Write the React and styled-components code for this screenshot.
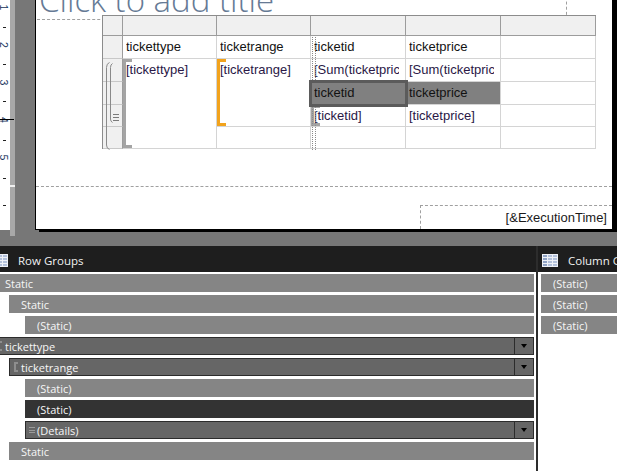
import React from 'react';
import styled, { createGlobalStyle, css } from 'styled-components';

const GlobalStyle = createGlobalStyle`
  html, body { margin: 0; padding: 0; background: #fff; }
  body { width: 617px; height: 471px; overflow: hidden; }
  * { box-sizing: border-box; }
`;

const Screen = styled.div`
  width: 617px;
  height: 471px;
  display: flex;
  flex-direction: column;
  overflow: hidden;
`;

/* ---------- design surface ---------- */

const Designer = styled.div`
  height: 246px;
  flex: none;
  background: #777;
  display: flex;
  align-items: flex-start;
  overflow: hidden;
`;

const Page = styled.div`
  flex: none;
  margin-left: 20px;
  margin-top: -20px;
  width: 578px;
  height: 250px;
  background: #fff;
  border: 1px solid #000;
  box-shadow: 4px 2px 0 #000;
  display: flex;
  flex-direction: column;
`;

const Body = styled.div`
  height: 206px;
  flex: none;
  border-bottom: 1px dashed #a0a0a0;
`;

const TitleBox = styled.div`
  margin-left: 1px;
  width: 530px;
  height: 39px;
  border-right: 1px dashed #a0a0a0;
  border-bottom: 1px dashed #a0a0a0;
  overflow: hidden;
  padding-left: 2px;
  font-family: 'Open Sans', 'Noto Sans', sans-serif;
  font-weight: 300;
  font-size: 33px;
  line-height: 38px;
  color: #667a95;
  white-space: nowrap;
`;

const Tablix = styled.div`
  position: relative;
  z-index: 1;
  margin-left: 66px;
  margin-top: -5px;
  width: 494px;
  display: grid;
  grid-template-columns: 20px 94px 94px 95px 95px 95px;
  grid-template-rows: 20px 23px 23px 23px 22px 22px;
  border-left: 1px solid #8c8c8c;
  border-top: 1px solid #8c8c8c;
  background: #fff;
`;

const Handle = styled.div`
  background: #f0f0f0;
  border-right: 1px solid #9c9c9c;
  border-bottom: 1px solid ${(p) => (p.$top ? '#9c9c9c' : '#c8c8c8')};
`;

const barColors = { grey: '#a4a4a4', orange: '#f2a31c' };
const shades = { grey: '#808080', selected: '#808080' };

const Cell = styled.div`
  position: relative;
  grid-row: span ${(p) => p.$rows || 1};
  background: ${(p) => shades[p.$shade] || '#fff'};
  border-right: 1px solid #d4d4d4;
  border-bottom: 1px solid #d4d4d4;
  padding-left: 3px;
  font-family: 'Liberation Sans', Arial, sans-serif;
  font-size: 13px;
  line-height: 22px;
  color: ${(p) => (p.$field ? '#2a1846' : '#121212')};
  ${(p) =>
    p.$shade === 'selected' &&
    css`
      z-index: 3;
      outline: 3px solid #5b5b5b;
      outline-offset: -1px;
    `}
  ${(p) =>
    p.$bar &&
    css`
      &::before {
        content: '';
        position: absolute;
        left: 0;
        top: 0;
        bottom: 0;
        width: 6px;
        border: solid ${barColors[p.$bar]};
        border-width: 3px 0 3px 3px;
      }
    `}
`;

const CellText = styled.span`
  display: block;
  margin-right: 6px;
  white-space: nowrap;
  overflow: hidden;
`;

const GroupMarker = styled.div`
  position: absolute;
  z-index: 2;
  left: 209px;
  top: 21px;
  width: 4px;
  height: 113px;
  border-left: 1px dotted #8a8a8a;
  border-right: 1px dotted #8a8a8a;
  pointer-events: none;
`;

const RowBracket = styled.svg`
  position: absolute;
  z-index: 2;
  left: 0;
  top: 44px;
`;

const Footer = styled.div`
  flex: 1;
  display: flex;
  justify-content: flex-end;
  align-items: flex-end;
`;

const ExecBox = styled.div`
  width: 192px;
  height: 24px;
  border-top: 1px dashed #a0a0a0;
  border-left: 1px dashed #a0a0a0;
  padding: 1px 5px 0 0;
  text-align: right;
  font-family: 'Liberation Sans', Arial, sans-serif;
  font-size: 13px;
  line-height: 22px;
  color: #1a1a1a;
`;

const Ruler = () => {
  const numbers = [
    [1, 7.5],
    [2, 45],
    [3, 82.5],
    [4, 120],
    [5, 157.5],
  ];
  const ticks = [27, 64, 101, 140, 178, 205];
  return (
    <svg width="15" height="236" style={{ flex: 'none', display: 'block' }}>
      <rect x="0" y="0" width="10" height="230" fill="#fff" />
      <rect x="10" y="0" width="5" height="236" fill="#a8a8a8" />
      <rect x="10" y="185" width="5" height="2" fill="#f0f0f0" />
      {ticks.map((y) => (
        <rect key={y} x="3" y={y} width="3" height="1" fill="#222" />
      ))}
      {numbers.map(([n, y]) => (
        <text
          key={n}
          transform={`translate(0 ${y}) rotate(90)`}
          textAnchor="middle"
          fontSize="10.5"
          fontFamily="'Liberation Sans', sans-serif"
          fill="#14325a"
        >
          {n}
        </text>
      ))}
      <rect x="0" y="119" width="14" height="1" fill="#000" />
    </svg>
  );
};

/* ---------- grouping pane ---------- */

const Panels = styled.div`
  flex: 1;
  display: flex;
  background: #fff;
  min-height: 0;
`;

const Pane = styled.div`
  display: flex;
  flex-direction: column;
  overflow: hidden;
  ${(p) => (p.$width ? css`width: ${p.$width}px; flex: none;` : css`flex: 1; min-width: 0;`)}
`;

const Divider = styled.div`
  width: 2px;
  flex: none;
  background: #2d2d2d;
`;

const PaneHeader = styled.div`
  height: 26px;
  flex: none;
  background: #1e1e1e;
  display: flex;
  align-items: center;
  gap: 10px;
  padding-left: ${(p) => p.$pad}px;
  padding-top: 2px;
  color: #f1f1f1;
  font-family: 'Open Sans', 'Noto Sans', sans-serif;
  font-size: 11.5px;
  white-space: nowrap;
`;

const List = styled.div`
  display: flex;
  flex-direction: column;
  gap: 3px;
  padding-top: 2px;
`;

const itemBg = { static: '#858585', group: '#666666', selected: '#333333' };

const Item = styled.div`
  position: relative;
  flex: none;
  height: 18px;
  margin-left: ${(p) => p.$left}px;
  margin-right: ${(p) => p.$right || 0}px;
  padding-left: 12px;
  display: flex;
  align-items: center;
  background: ${(p) => itemBg[p.$variant]};
  color: #f6f6f6;
  font-family: 'Open Sans', 'Noto Sans', sans-serif;
  font-size: 11px;
  white-space: nowrap;
  ${(p) =>
    p.$variant === 'group' &&
    css`
      border: 1px solid #2c2c2c;
      padding-left: 11px;
    `}
`;

const DropButton = styled.div`
  margin-left: auto;
  width: 19px;
  height: 100%;
  border-left: 1px solid #2c2c2c;
  display: flex;
  align-items: center;
  justify-content: center;

  &::after {
    content: '';
    width: 0;
    height: 0;
    border-left: 3.5px solid transparent;
    border-right: 3.5px solid transparent;
    border-top: 4px solid #000;
  }
`;

const BracketIcon = styled.span`
  position: absolute;
  left: 4px;
  top: 3px;
  width: 4px;
  height: 10px;
  border: 2px solid #8e8e8e;
  border-right: none;
`;

const DetailsIcon = styled.span`
  position: absolute;
  left: 3px;
  top: 5px;
  width: 6px;
  height: 6px;
  border-top: 1px solid #9a9a9a;
  border-bottom: 1px solid #9a9a9a;

  &::after {
    content: '';
    position: absolute;
    left: 0;
    right: 0;
    top: 1.5px;
    border-top: 1px solid #9a9a9a;
  }
`;

const GridIcon = ({ offset = 0 }) => (
  <svg width="16" height="13" viewBox="0 0 16 13" style={{ marginLeft: offset, flex: 'none' }}>
    <rect x="0" y="0" width="16" height="13" fill="#eef1f7" />
    {[1, 4, 7, 10].map((y) =>
      [
        [1, 4],
        [6, 4],
        [11, 4],
      ].map(([x, w]) => (
        <rect key={`${x}-${y}`} x={x} y={y} width={w} height="2" fill={x === 1 ? '#8fa2c4' : '#b3c1db'} />
      ))
    )}
  </svg>
);

const rowGroups = [
  { label: 'Static', level: 0, variant: 'static' },
  { label: 'Static', level: 1, variant: 'static' },
  { label: '(Static)', level: 2, variant: 'static' },
  { label: 'tickettype', level: 0, variant: 'group', icon: 'bracket' },
  { label: 'ticketrange', level: 1, variant: 'group', icon: 'bracket' },
  { label: '(Static)', level: 2, variant: 'static' },
  { label: '(Static)', level: 2, variant: 'selected' },
  { label: '(Details)', level: 2, variant: 'group', icon: 'details' },
  { label: 'Static', level: 1, variant: 'static' },
];

export default function App() {
  return (
    <Screen>
      <GlobalStyle />
      <Designer>
        <Ruler />
        <Page>
          <Body>
            <TitleBox>Click to add title</TitleBox>
            <Tablix>
              <Handle $top />
              <Handle $top />
              <Handle $top />
              <Handle $top />
              <Handle $top />
              <Handle $top />

              <Handle />
              <Cell><CellText>tickettype</CellText></Cell>
              <Cell><CellText>ticketrange</CellText></Cell>
              <Cell><CellText>ticketid</CellText></Cell>
              <Cell><CellText>ticketprice</CellText></Cell>
              <Cell />

              <Handle />
              <Cell $rows={4} $bar="grey" $field><CellText>[tickettype]</CellText></Cell>
              <Cell $rows={3} $bar="orange" $field><CellText>[ticketrange]</CellText></Cell>
              <Cell $field><CellText>[Sum(ticketprice)]</CellText></Cell>
              <Cell $field><CellText>[Sum(ticketprice)]</CellText></Cell>
              <Cell />

              <Handle />
              <Cell $shade="selected"><CellText>ticketid</CellText></Cell>
              <Cell $shade="grey"><CellText>ticketprice</CellText></Cell>
              <Cell />

              <Handle />
              <Cell $bar="grey" $field><CellText>[ticketid]</CellText></Cell>
              <Cell $field><CellText>[ticketprice]</CellText></Cell>
              <Cell />

              <Handle />
              <Cell />
              <Cell />
              <Cell />
              <Cell />

              <GroupMarker />
              <RowBracket width="20" height="92" viewBox="0 0 20 92">
                <path d="M6.5 2.5 Q3.5 3.5 3.5 7.5 L3.5 85 Q3.5 88.5 6.5 89.5" fill="none" stroke="#8a8a8a" />
                <path d="M9.5 3.5 Q7.5 4.5 7.5 7.5 L7.5 59 Q7.5 61.5 9.5 62.5" fill="none" stroke="#8a8a8a" />
                <path d="M10 54.5 H16 M10 57.5 H16 M10 60.5 H16" stroke="#7a7a7a" />
              </RowBracket>
            </Tablix>
          </Body>
          <Footer>
            <ExecBox>[&amp;ExecutionTime]</ExecBox>
          </Footer>
        </Page>
      </Designer>

      <Panels>
        <Pane $width={536}>
          <PaneHeader $pad={0}>
            <GridIcon offset={-8} />
            Row Groups
          </PaneHeader>
          <List>
            {rowGroups.map((g, i) => (
              <Item key={i} $left={-7 + g.level * 16} $right={2} $variant={g.variant}>
                {g.icon === 'bracket' && <BracketIcon />}
                {g.icon === 'details' && <DetailsIcon />}
                {g.label}
                {g.variant === 'group' && <DropButton />}
              </Item>
            ))}
          </List>
        </Pane>
        <Divider />
        <Pane>
          <PaneHeader $pad={4}>
            <GridIcon />
            Column Groups
          </PaneHeader>
          <List>
            <Item $left={3} $variant="static">(Static)</Item>
            <Item $left={3} $variant="static">(Static)</Item>
            <Item $left={3} $variant="static">(Static)</Item>
          </List>
        </Pane>
      </Panels>
    </Screen>
  );
}
